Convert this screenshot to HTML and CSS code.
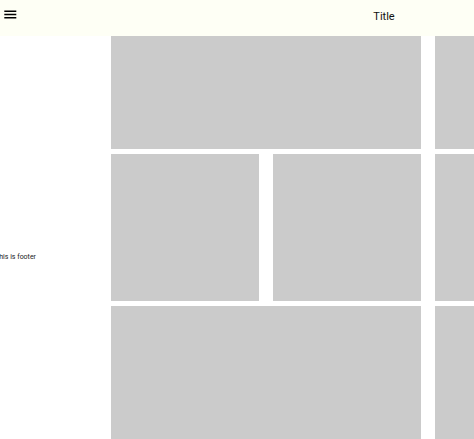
FILE: index.html
```html
<!DOCTYPE html>
<html lang="en">
<head>
<meta charset="utf-8">
<meta name="viewport" content="width=device-width, initial-scale=1">
<title>Title</title>
<link rel="stylesheet" href="styles.css">
</head>
<body>
<header class="bar">
  <button class="menu" type="button" aria-label="Menu">
    <svg width="13" height="10" viewBox="0 0 13 10" aria-hidden="true"><path d="M.3 1.3h12M.3 4.5h12M.3 7.7h12" stroke="#000" stroke-width="1.4"/></svg>
  </button>
  <h1 class="title">Title</h1>
</header>
<div class="layout">
  <footer class="footer"><span>This is footer</span></footer>
  <main class="board">
    <section class="group">
      <div class="tile wide"></div>
      <div class="tile"></div>
      <div class="tile"></div>
      <div class="tile wide"></div>
    </section>
    <section class="group">
      <div class="tile wide"></div>
      <div class="tile wide"></div>
      <div class="tile wide"></div>
    </section>
  </main>
</div>
</body>
</html>
```
FILE: styles.css
```css
* {
  box-sizing: border-box;
}

body {
  margin: 0;
  overflow: hidden;
  background: #fff;
  color: #111;
  font-family: Roboto, sans-serif;
}

.bar {
  display: grid;
  grid-template-columns: 24px 1fr 24px;
  align-items: start;
  min-width: 768px;
  height: 36px;
  background: #fefff5;
}

.menu {
  display: flex;
  margin: 0;
  padding: 10px 0 0 4px;
  border: 0;
  background: none;
}

.title {
  margin: 0;
  padding-top: 8px;
  text-align: center;
  font-size: 11px;
  line-height: 17px;
  font-weight: 400;
}

.layout {
  display: grid;
  grid-template-columns: 111px 1fr;
}

.footer {
  display: flex;
  justify-content: flex-end;
  width: 36px;
  padding-top: 215px;
  color: #222;
  font-size: 7px;
  line-height: 12px;
  white-space: nowrap;
}

.board {
  display: flex;
  gap: 14px;
}

.group {
  display: grid;
  flex: none;
  grid-template-columns: 148px 148px;
  grid-template-rows: 113px 147px 133px;
  gap: 5px 14px;
}

.tile {
  background: #cbcbcb;
}

.wide {
  grid-column: span 2;
}
```
